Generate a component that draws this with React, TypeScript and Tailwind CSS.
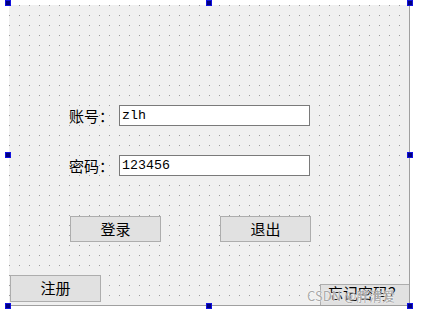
import React from "react";

const cjk = { fontFamily: '"Noto Sans CJK SC", "Noto Sans", sans-serif' };
const mono = { fontFamily: '"Liberation Mono", "Noto Sans CJK SC", monospace' };

function Handle({ cls }: { cls: string }) {
  return <div className={`absolute w-[6px] h-[6px] bg-[#000080] border border-[#1010e0] ${cls}`} />;
}

function Field({ label, value }: { label: string; value: string }) {
  return (
    <div className="flex items-center h-[21px] pl-[60px]">
      <div className="w-[50px] text-[15px] leading-[21px] text-black" style={cjk}>
        {label}
      </div>
      <div className="w-[191px] h-[21px] bg-white border border-[#7a7a7a] flex items-center pl-[2px] text-[13.3px] text-black" style={mono}>
        {value}
      </div>
    </div>
  );
}

function Btn({ text, cls }: { text: string; cls: string }) {
  return (
    <div className={`bg-[#e1e1e1] border border-[#adadad] flex items-center justify-center text-[15px] text-black shrink-0 ${cls}`} style={cjk}>
      {text}
    </div>
  );
}

export default function App() {
  return (
    <div className="relative w-[423px] h-[316px] bg-white overflow-hidden pt-[5px] pl-[9px]">
      <div
        className="relative w-[401px] h-[301px] border-r border-b border-[#a0a0a0] bg-[#f0f0f0] overflow-hidden flex flex-col"
        style={{
          backgroundImage: "radial-gradient(circle at 0.5px 0.5px, #9c9c9c 0.75px, transparent 0.9px)",
          backgroundSize: "10px 10px",
        }}
      >
        <div className="h-[100px] shrink-0" />
        <Field label="账号：" value="zlh" />
        <div className="h-[29px] shrink-0" />
        <Field label="密码：" value="123456" />
        <div className="h-[40px] shrink-0" />
        <div className="flex pl-[61px]">
          <Btn text="登录" cls="w-[91px] h-[26px]" />
          <Btn text="退出" cls="w-[91px] h-[26px] ml-[59px]" />
        </div>
        <div className="h-[33px] shrink-0" />
        <div className="flex items-start">
          <Btn text="注册" cls="w-[91px] h-[27px] ml-[1px]" />
          <div
            className="ml-[219px] mt-[9px] w-[100px] h-[27px] shrink-0 bg-[#e1e1e1] border border-[#adadad] pl-[7px] text-[15px] leading-[16px] text-black"
            style={cjk}
          >
            忘记密码？
          </div>
        </div>
      </div>

      <Handle cls="left-[5px] top-[0px]" />
      <Handle cls="left-[206px] top-[0px]" />
      <Handle cls="left-[407px] top-[0px]" />
      <Handle cls="left-[5px] top-[152px]" />
      <Handle cls="left-[407px] top-[152px]" />
      <Handle cls="left-[5px] top-[303px]" />
      <Handle cls="left-[206px] top-[303px]" />
      <Handle cls="left-[407px] top-[303px]" />

      <div
        className="absolute left-[307px] top-[287px] text-[13px] leading-[18px] text-[rgba(140,140,140,0.75)] whitespace-nowrap"
        style={{ ...cjk, textShadow: "0 0 2px #fff, 0 0 1px #fff" }}
      >
        CSDN @胖清爱
      </div>
    </div>
  );
}
